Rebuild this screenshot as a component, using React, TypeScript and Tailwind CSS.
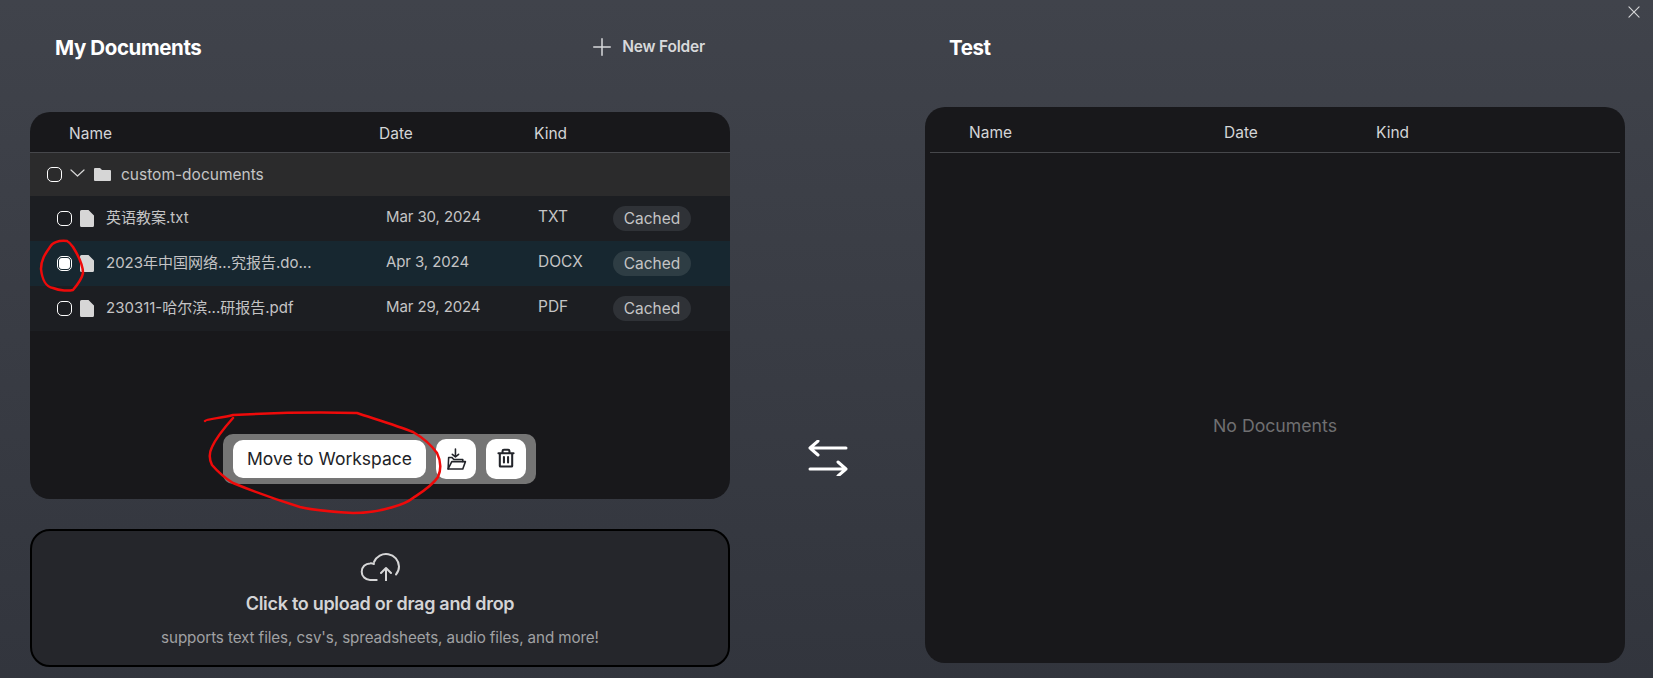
import { PiPlus, PiTrashBold, PiX } from "react-icons/pi";

const files = [
  { name: "英语教案.txt", date: "Mar 30, 2024", kind: "TXT", selected: false },
  { name: "2023年中国网络...究报告.do...", date: "Apr 3, 2024", kind: "DOCX", selected: true },
  { name: "230311-哈尔滨...研报告.pdf", date: "Mar 29, 2024", kind: "PDF", selected: false },
];

function Checkbox({ checked = false }: { checked?: boolean }) {
  return (
    <span className="flex h-[15px] w-[15px] shrink-0 items-center justify-center rounded-[5px] border border-white">
      {checked && <span className="h-[11px] w-[11px] rounded-[3px] bg-white" />}
    </span>
  );
}

function FolderDownload() {
  return (
    <svg width="21" height="22" viewBox="0 0 19 21" fill="none" stroke="#23252b" strokeWidth="1.5" strokeLinecap="round" strokeLinejoin="round">
      <path d="M1.5 20 L2 9 H5 L7 11 H15.5 V13" />
      <path d="M1.5 20 L5 13 H18 L15.5 20 Z" />
      <path d="M8.5 1 V8.5 M5.5 6 L8.5 8.5 L11.5 6" />
    </svg>
  );
}

function CloudUpload() {
  return (
    <svg width="40" height="30" viewBox="0 0 40 30" fill="none" stroke="#d6d6d7" strokeWidth="2" strokeLinecap="round" strokeLinejoin="round">
      <path d="M16.7 29 H10 A8.3 8.3 0 0 1 10 12.4 Q12 12.2 14 13" />
      <path d="M14 11 A13 13 0 0 1 39 15.5 Q39 20 36 23.5" />
      <path d="M26 30 V17 M21 22 L26 17 L31 22" />
    </svg>
  );
}

export default function App() {
  return (
    <div className="relative flex h-[678px] w-full overflow-hidden bg-gradient-to-b from-[#40434b] to-[#32353d] font-['Inter','Noto_Sans_CJK_SC',sans-serif] text-white">
      <button className="absolute right-[10px] top-[3px] text-[#d5d6d8]">
        <PiX size={18} />
      </button>

      <div className="ml-[30px] flex w-[700px] shrink-0 flex-col">
        <div className="flex h-[112px] items-start justify-between pl-[25px] pr-[25px] pt-[34px]">
          <h1 className="text-[20.5px] font-bold leading-[28px] tracking-[-0.4px]">My Documents</h1>
          <button className="flex items-center gap-[8px] pt-[1px] text-[15.5px] font-semibold leading-[24px] tracking-[-0.2px] text-[#d8d9db]">
            <PiPlus size={24} />
            New Folder
          </button>
        </div>

        <div className="relative flex h-[387px] flex-col overflow-hidden rounded-[20px] bg-[#18181b]">
          <div className="flex h-[41px] items-center border-b border-[#46474b] pl-[39px] pt-[3px] text-[15.5px] text-[#d4d5d7]">
            <span className="w-[310px]">Name</span>
            <span className="w-[155px]">Date</span>
            <span>Kind</span>
          </div>
          <div className="flex h-[43px] items-center bg-[#2b2b2c] pl-[17px] text-[15.5px] text-[#c4c4c5]">
            <Checkbox />
            <svg width="15" height="8" viewBox="0 0 15 8" fill="none" stroke="#d6d6d6" strokeWidth="1.2" strokeLinecap="round" strokeLinejoin="round" className="ml-[8px] mt-[-3px]">
              <path d="M1 1 L7.5 7 L14 1" />
            </svg>
            <svg width="17" height="13" viewBox="0 0 17 13" fill="#d6d6d6" className="ml-[9px]">
              <path d="M1 0 H6 L8 2 H16 A1 1 0 0 1 17 3 V12 A1 1 0 0 1 16 13 H1 A1 1 0 0 1 0 12 V1 A1 1 0 0 1 1 0 Z" />
            </svg>
            <span className="ml-[10px]">custom-documents</span>
          </div>
          {files.map((file) => (
            <div
              key={file.name}
              className={`flex h-[45px] items-center pl-[27px] text-[15.5px] text-[#c4c4c5] ${file.selected ? "bg-[#172730]" : "bg-[#1c1e22]"}`}
            >
              <Checkbox checked={file.selected} />
              <svg width="14" height="17" viewBox="0 0 14 17" fill="#d6d6d6" className="ml-[8px]">
                <path d="M1.5 0 H8.5 L14 5.5 V15.5 A1.5 1.5 0 0 1 12.5 17 H1.5 A1.5 1.5 0 0 1 0 15.5 V1.5 A1.5 1.5 0 0 1 1.5 0 Z" />
              </svg>
              <span className="ml-[12px] w-[280px] truncate text-[15px]">{file.name}</span>
              <span className="w-[152px] pb-[3px] text-[15px] tracking-[-0.1px]">{file.date}</span>
              <span className="w-[75px] pb-[3px]">{file.kind}</span>
              <span
                className={`flex h-[25px] w-[78px] items-center justify-center rounded-full ${file.selected ? "bg-[#2e3d44]" : "bg-[#2f3237]"}`}
              >
                Cached
              </span>
            </div>
          ))}
          <div className="absolute bottom-[15px] left-[193px] flex h-[50px] items-center gap-[10px] rounded-[10px] bg-[#757575] pl-[10px] pr-[10px]">
            <button className="h-[38px] w-[193px] rounded-[10px] bg-white text-[17.5px] text-[#222327]">
              Move to Workspace
            </button>
            <button className="flex h-[40px] w-[40px] items-center justify-center rounded-[10px] bg-white">
              <FolderDownload />
            </button>
            <button className="flex h-[40px] w-[40px] items-center justify-center rounded-[10px] bg-white text-[#23252b]">
              <PiTrashBold size={22} />
            </button>
          </div>
        </div>

        <div className="mt-[30px] flex h-[138px] flex-col items-center rounded-[20px] border-2 border-black bg-[#25262b] pt-[20px]">
          <CloudUpload />
          <p className="mt-[11px] text-[18px] font-semibold leading-[24px] tracking-[-0.3px] text-[#d4d4d6]">
            Click to upload or drag and drop
          </p>
          <p className="mt-[12px] text-[15.2px] leading-[20px] tracking-[-0.1px] text-[#a0a1a3]">
            supports text files, csv's, spreadsheets, audio files, and more!
          </p>
        </div>
      </div>

      <div className="flex flex-1 justify-center pt-[440px]">
        <svg width="40" height="36" viewBox="0 0 40 36" fill="none" stroke="white" strokeWidth="3" strokeLinecap="round" strokeLinejoin="round">
          <path d="M38 8 H2 M10 1 L2 8 L10 15" />
          <path d="M2 29 H38 M30 22 L38 29 L30 36" />
        </svg>
      </div>

      <div className="mr-[28px] flex w-[700px] shrink-0 flex-col">
        <div className="h-[107px] pl-[24px] pt-[34px]">
          <h2 className="text-[20.5px] font-bold leading-[28px] tracking-[-0.4px]">Test</h2>
        </div>
        <div className="flex h-[556px] flex-col rounded-[20px] bg-[#18181b] px-[5px]">
          <div className="flex h-[46px] shrink-0 items-center border-b border-[#46474b] pl-[39px] pt-[7px] text-[15.5px] text-[#d4d5d7]">
            <span className="w-[255px]">Name</span>
            <span className="w-[152px]">Date</span>
            <span>Kind</span>
          </div>
          <div className="flex flex-1 items-center justify-center pt-[36px] text-[17.7px] text-[#6f6f71]">No Documents</div>
        </div>
      </div>

      {/* red pen marks on the screenshot */}
      <svg className="pointer-events-none absolute left-0 top-0" width="1653" height="678" fill="none" stroke="#ee0a0a" strokeWidth="2.5" strokeLinecap="round" strokeLinejoin="round">
        <path d="M67 241 C58 240 52 243 50 247 C45 254 41 260 41 269 C42 279 46 287 53 288 C60 291 69 291 73 290 C78 284 82 279 83 273 C83 264 78 255 73 247 C71 244 69 242 67 241" />
        <path d="M205 421 C206 419 222 418 233 415 C270 413 320 412 357 413 C375 419 398 426 413 432 C425 439 432 446 437 453 C441 461 441 470 438 477 C432 486 422 492 413 498 C407 503 400 505 393 507 C380 511 366 513 353 513 C335 512 317 511 300 507 C277 500 255 492 233 483 C225 478 218 472 212 465 C209 459 209 453 212 447 C217 436 225 427 233 418" />
      </svg>
    </div>
  );
}
